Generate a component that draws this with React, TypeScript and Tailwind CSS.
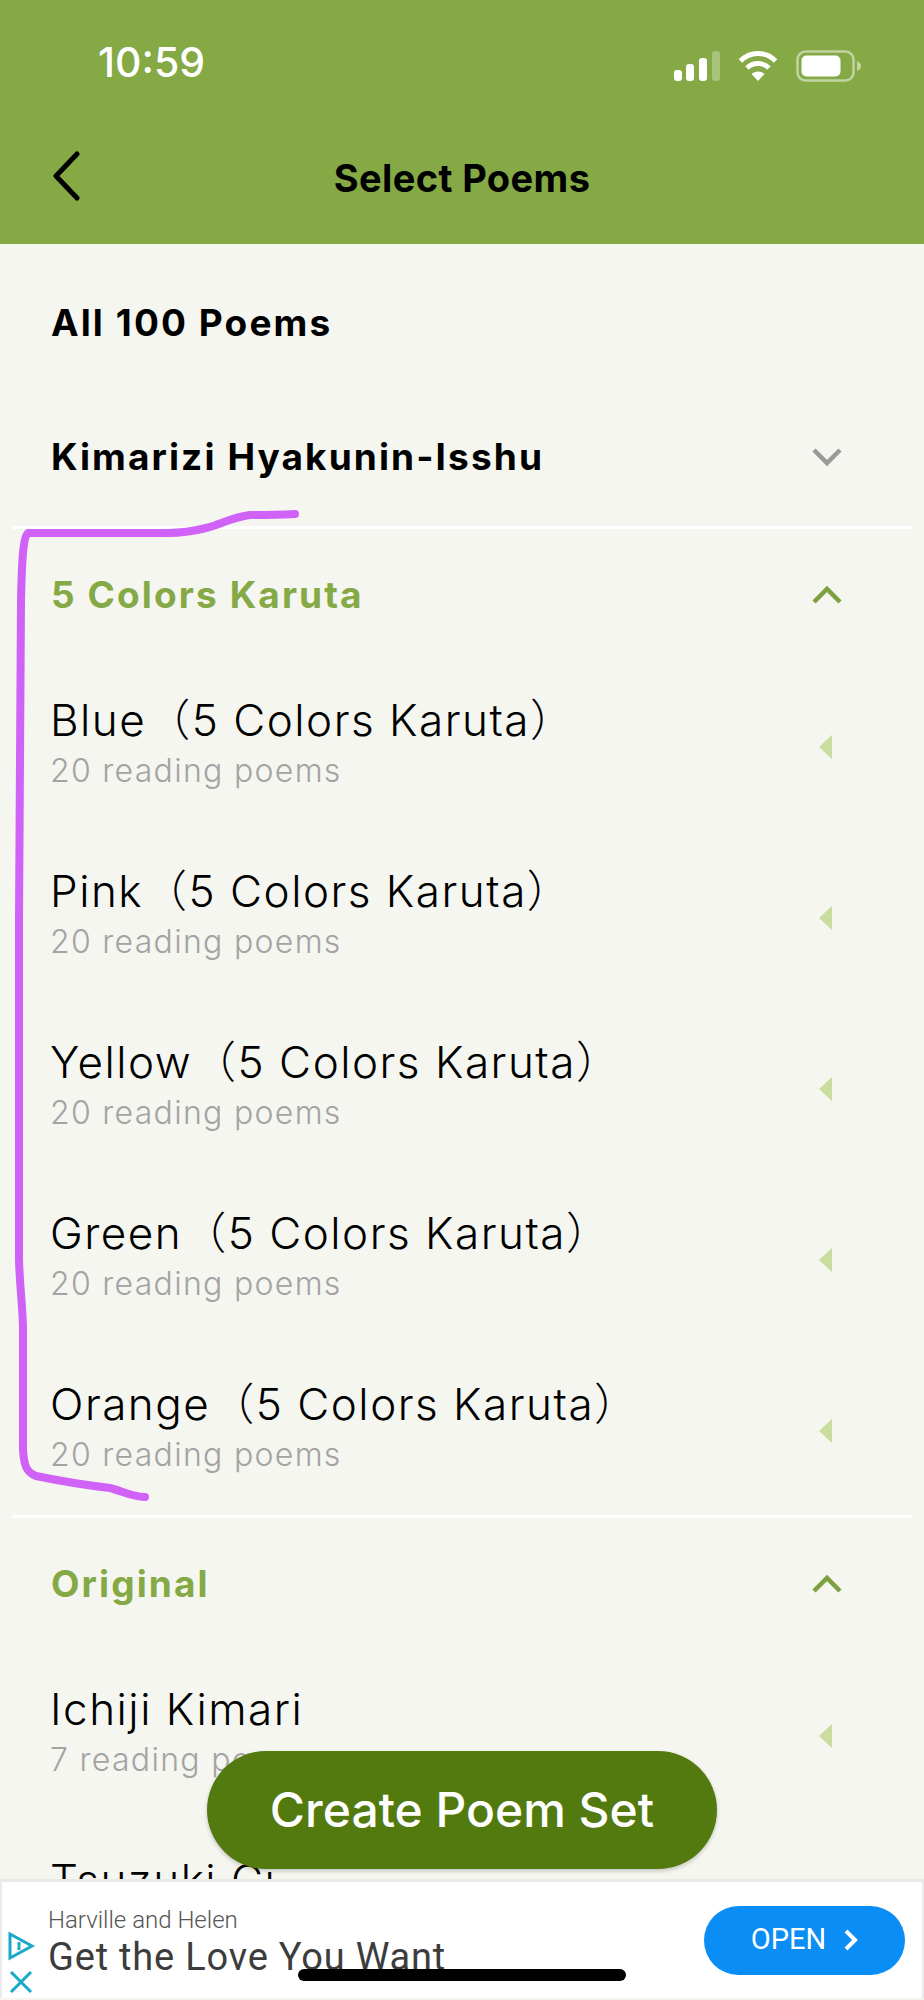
const sans = "font-['Inter','Noto_Sans_CJK_JP',sans-serif]";

const colorItems = [
  "Blue（5 Colors Karuta）",
  "Pink（5 Colors Karuta）",
  "Yellow（5 Colors Karuta）",
  "Green（5 Colors Karuta）",
  "Orange（5 Colors Karuta）",
];

function Chevron({ up, color }: { up?: boolean; color: string }) {
  return (
    <svg width="30" height="20" viewBox="0 0 30 20" fill="none" stroke={color} strokeWidth="4.5">
      <path d={up ? "M2 17 L15 4 L28 17" : "M2 3 L15 16 L28 3"} />
    </svg>
  );
}

function SectionHeader({ title, open }: { title: string; open?: boolean }) {
  return (
    <div className={`flex shrink-0 items-center justify-between pl-[51px] pr-[82px] ${open ? "h-[131px]" : "h-[134px]"}`}>
      <span
        className={`text-[37px] font-bold tracking-[2.1px] ${open ? "text-[#84a945]" : "text-black"}`}
      >
        {title}
      </span>
      <Chevron up={open} color={open ? "#7ea13f" : "#999999"} />
    </div>
  );
}

function PoemRow({ title, count }: { title: string; count: string }) {
  return (
    <div className="flex h-[171px] shrink-0 items-center justify-between pl-[50px] pr-[92px]">
      <div className="flex flex-col pb-[10px]">
        <span className="text-[44px] leading-[60px] font-light tracking-[1.5px] text-black">{title}</span>
        <span className="text-[32px] leading-[42px] font-light tracking-[1.3px] text-[#a3a3a3]">{count}</span>
      </div>
      <svg width="13" height="24" viewBox="0 0 13 24" className="mt-[2px]">
        <path d="M13 0 L0 12 L13 24 Z" fill="#c8dd9e" />
      </svg>
    </div>
  );
}

function Divider() {
  return <div className="mx-3 h-[3px] shrink-0 bg-white" />;
}

function StatusIcons() {
  return (
    <div className="flex items-center gap-[18px]">
      <svg width="46" height="30" viewBox="0 0 46 30" fill="white">
        <rect x="0" y="19" width="8" height="11" rx="3" />
        <rect x="12" y="13" width="8" height="17" rx="3" />
        <rect x="25" y="7" width="8" height="23" rx="3" />
        <rect x="38" y="0" width="8" height="30" rx="3" opacity="0.3" />
      </svg>
      <svg width="40" height="30" viewBox="0 0 40 30" fill="none" stroke="white" strokeWidth="5">
        <path d="M2.5 10 C12 0 28 0 37.5 10" />
        <path d="M9 17 C15 11 25 11 31 17" />
        <path d="M20 30 L13.5 23 C17 19.5 23 19.5 26.500 23 Z" fill="white" stroke="none" />
      </svg>
      <svg width="66" height="32" viewBox="0 0 66 32" fill="none">
        <rect x="1.500" y="1.500" width="56" height="29" rx="8" stroke="white" strokeOpacity="0.5" strokeWidth="2.500" />
        <rect x="5.500" y="5.500" width="39" height="21" rx="5" fill="white" />
        <path d="M61 11 C64 12 65 14 65 16 C65 18 64 20 61 21 Z" fill="white" fillOpacity="0.5" />
      </svg>
    </div>
  );
}

function AdBanner() {
  return (
    <div className="relative mb-[2px] flex h-[116px] shrink-0 items-center justify-between border-x-2 border-[#eaeaea] bg-white pr-[17px] shadow-[0_-3px_0_#e9eae6]">
      <div className="flex items-center">
        <div className="mr-[8px] flex w-[38px] flex-col items-center gap-[10px] pt-[44px]">
          <svg width="30" height="30" viewBox="0 0 30 30" fill="none" stroke="#1ba9c9" strokeWidth="3">
            <path d="M4 3 L26 15 L4 27 Z" />
            <path d="M13 11 V19" />
          </svg>
          <svg width="24" height="22" viewBox="0 0 24 22" fill="none" stroke="#1ba9c9" strokeWidth="3">
            <path d="M2 1 L22 21 M22 1 L2 21" />
          </svg>
        </div>
        <div className="flex flex-col pt-[4px]">
          <span className="font-['Roboto',sans-serif] text-[24px] leading-[30px] font-light text-[#555555]">
            Harville and Helen
          </span>
          <span className="font-['Roboto',sans-serif] text-[38px] leading-[44px] tracking-[0.8px] text-[#3c3c3c]">
            Get the Love You Want
          </span>
        </div>
      </div>
      <div className="flex h-[69px] w-[201px] items-center justify-center gap-[18px] rounded-[35px] bg-[#0a8df5]">
        <span className="font-['Roboto',sans-serif] text-[29px] text-white">OPEN</span>
        <svg width="14" height="22" viewBox="0 0 14 22" fill="none" stroke="white" strokeWidth="4">
          <path d="M2 2 L11 11 L2 20" />
        </svg>
      </div>
      <div className="absolute top-[87px] left-[296px] h-[12px] w-[328px] rounded-full bg-black" />
    </div>
  );
}

export default function App() {
  return (
    <div className={`relative flex h-[2000px] w-[924px] flex-col overflow-hidden bg-[#f5f6f0] ${sans}`}>
      <header className="flex h-[244px] shrink-0 flex-col bg-[#84a945]">
        <div className="flex h-[122px] items-end justify-between pr-[62px] pl-[98px] pb-[40px]">
          <span className="text-[41px] leading-[40px] font-medium text-white">10:59</span>
          <StatusIcons />
        </div>
        <div className="relative flex flex-1 items-center justify-center pb-[10px]">
          <svg width="30" height="50" viewBox="0 0 30 50" fill="none" stroke="black" strokeWidth="5" strokeLinecap="round" strokeLinejoin="round" className="absolute top-[29px] left-[51px]">
            <path d="M26 3 L5 25 L26 47" />
          </svg>
          <span className="text-[38px] font-bold tracking-[0.4px] text-black">Select Poems</span>
        </div>
      </header>

      <main className="flex min-h-0 flex-1 flex-col overflow-hidden">
        <div className="flex h-[146px] shrink-0 items-center pl-[51px] pr-[82px] pt-[12px]">
          <span className="text-[37px] font-bold tracking-[2.1px] text-black">All 100 Poems</span>
        </div>
        <SectionHeader title="Kimarizi Hyakunin-Isshu" />
        <div className="h-[2px] shrink-0" />
        <Divider />
        <SectionHeader title="5 Colors Karuta" open />
        {colorItems.map((t) => (
          <PoemRow key={t} title={t} count="20 reading poems" />
        ))}
        <Divider />
        <SectionHeader title="Original" open />
        <PoemRow title="Ichiji Kimari" count="7 reading poems" />
        <PoemRow title="Tsuzuki Ci" count="7 reading poems" />
      </main>

      <AdBanner />

      {/* floating action button */}
      <button className="absolute top-[1751px] left-[207px] flex h-[118px] w-[510px] items-center justify-center rounded-[59px] bg-[#527a0f] shadow-[0_2px_4px_rgba(0,0,0,0.2)]">
        <span className="text-[48px] font-medium text-white">Create Poem Set</span>
      </button>

      {/* hand-drawn marker over the screenshot */}
      <svg width="924" height="2000" viewBox="0 0 924 2000" fill="none" className="pointer-events-none absolute top-0 left-0">
        <path
          d="M295 514 C275 515 260 515 250 515 C232 517 220 525 206 528 C190 532 180 533 168 533 L28 533 C24 536 22 550 21 600 L19 920 L19 1260 C20 1290 23 1310 23 1330 L23 1450 C24 1465 26 1472 36 1476 C60 1481 85 1485 110 1488 C122 1491 132 1497 145 1497"
          stroke="#d062f7"
          strokeWidth="8"
          strokeLinecap="round"
          strokeLinejoin="round"
        />
      </svg>
    </div>
  );
}
